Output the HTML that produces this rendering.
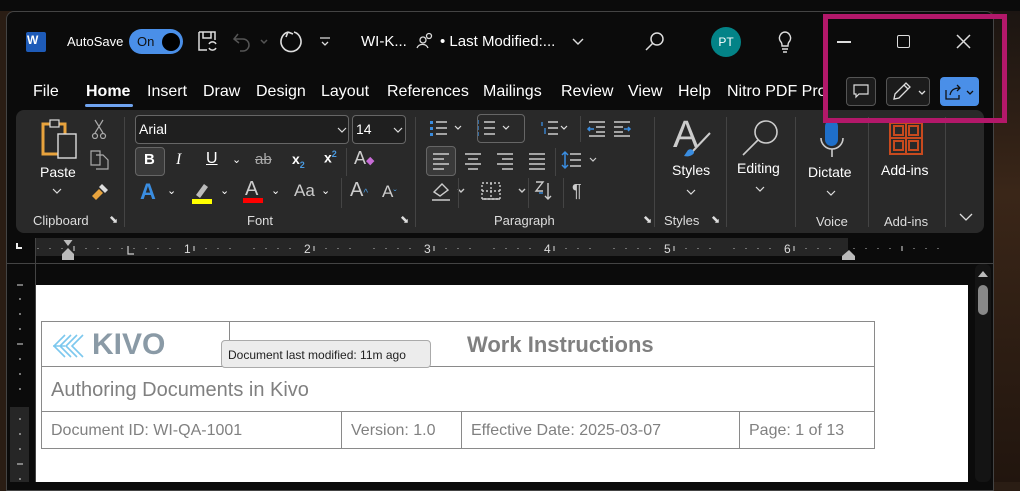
<!DOCTYPE html><html><head><style>
*{margin:0;padding:0;box-sizing:border-box}
body{width:1020px;height:482px;overflow:hidden;background:#2a1d14;font-family:"Segoe UI","Liberation Sans",sans-serif;position:relative;color:#fff}
.a{position:absolute}
.t{font-size:14px;color:#fff;white-space:nowrap}
.tab{position:absolute;top:83px;font-size:16px;color:#fff}
.sep{position:absolute;width:1px;background:#444}
.cell{position:absolute;border:1px solid #8a8a8a;color:#7d7d7d;font-family:"Liberation Sans",sans-serif}
.s{font-size:13px;color:#ddd;position:absolute;white-space:nowrap}
</style></head><body>
<div class="a" style="left:993px;top:0;width:27px;height:482px;background:linear-gradient(#1a1411,#3a2618 40%,#21150e)"></div>
<div class="a" style="left:0;top:0;width:1020px;height:11px;background:#0b0b0b"></div>
<div class="a" style="left:6px;top:11px;width:988px;height:480px;background:#0b0b0b;border:1px solid #444;border-radius:8px 8px 0 0"></div>
<!-- title bar -->
<div class="a" style="left:26px;top:32px;width:20px;height:20px;background:#1e5bb8;border-radius:2px"></div>
<div class="a" style="left:27px;top:33px;font-size:12px;font-weight:bold;color:#fff">W</div>
<div class="t a" style="left:67px;top:34px;font-size:13px">AutoSave</div>
<div class="a" style="left:129px;top:29px;width:54px;height:25px;background:#4a8fe8;border-radius:13px"></div>
<div class="t a" style="left:137px;top:34px;font-size:13px;color:#111">On</div>
<div class="a" style="left:162px;top:33px;width:18px;height:18px;background:#000;border-radius:50%"></div>
<svg class="a" style="left:196px;top:30px" width="24" height="24" fill="none" stroke="#ddd" stroke-width="1.5"><path d="M3 2h16v8M3 2v18h8M7 2v6h8V2M13 14a4 4 0 0 1 7 0M20 18a4 4 0 0 1-7 0"/></svg>
<svg class="a" style="left:232px;top:30px" width="36" height="24" fill="none" stroke="#555" stroke-width="1.5"><path d="M6 4L2 9l5 4M2 9h9a6 6 0 0 1 0 12h-3M29 10l3 3 3-3"/></svg>
<svg class="a" style="left:280px;top:29px" width="24" height="26" fill="none" stroke="#ddd" stroke-width="1.6"><path d="M8 3a10 10 0 1 0 6 0M8 3L6 8M8 3l5 2"/></svg>
<svg class="a" style="left:319px;top:36px" width="12" height="12" fill="none" stroke="#ddd" stroke-width="1.3"><path d="M1 2h10M3 6l3 3 3-3"/></svg>
<div class="t a" style="left:361px;top:33px;font-size:15px">WI-K...</div>
<svg class="a" style="left:416px;top:32px" width="18" height="18" fill="none" stroke="#ddd" stroke-width="1.3"><circle cx="7" cy="8" r="3"/><path d="M1 16a6 6 0 0 1 11 0"/><circle cx="13" cy="4" r="2.5"/></svg>
<div class="t a" style="left:440px;top:33px;font-size:15px">• Last Modified:...</div>
<svg class="a" style="left:572px;top:37px" width="12" height="10" fill="none" stroke="#ddd" stroke-width="1.4"><path d="M1 2l5 5 5-5"/></svg>
<svg class="a" style="left:644px;top:30px" width="22" height="22" fill="none" stroke="#ddd" stroke-width="1.5"><circle cx="13" cy="9" r="6"/><path d="M9 13l-7 7"/></svg>
<div class="a" style="left:711px;top:27px;width:30px;height:30px;border-radius:50%;background:#038387;color:#fff;font-size:12px;text-align:center;line-height:30px">PT</div>
<svg class="a" style="left:776px;top:30px" width="18" height="24" fill="none" stroke="#ddd" stroke-width="1.4"><path d="M9 2a6 6 0 0 0-4 10c1 1 1 3 1 4h6c0-1 0-3 1-4a6 6 0 0 0-4-10M6 19h6M7 22h4"/></svg>
<div class="a" style="left:837px;top:41px;width:14px;height:1.5px;background:#ddd"></div>
<div class="a" style="left:897px;top:35px;width:13px;height:13px;border:1.5px solid #ddd;border-radius:2px"></div>
<svg class="a" style="left:956px;top:34px" width="15" height="15" stroke="#ddd" stroke-width="1.5"><path d="M1 1l13 13M14 1L1 14"/></svg>
<!-- tabs -->
<div class="tab" style="left:33px">File</div>
<div class="tab" style="left:86px;font-weight:bold">Home</div>
<div class="a" style="left:85px;top:104px;width:48px;height:3px;background:#6fa3ef;border-radius:2px"></div>
<div class="tab" style="left:147px">Insert</div>
<div class="tab" style="left:203px">Draw</div>
<div class="tab" style="left:256px">Design</div>
<div class="tab" style="left:321px">Layout</div>
<div class="tab" style="left:387px">References</div>
<div class="tab" style="left:483px">Mailings</div>
<div class="tab" style="left:561px">Review</div>
<div class="tab" style="left:628px">View</div>
<div class="tab" style="left:678px">Help</div>
<div class="tab" style="left:727px">Nitro PDF Pro</div>
<div class="a" style="left:846px;top:77px;width:30px;height:29px;border:1px solid #555;border-radius:4px;background:#1c1c1c"></div>
<svg class="a" style="left:853px;top:83px" width="16" height="16" fill="none" stroke="#ddd" stroke-width="1.2"><path d="M1 2h14v9H6l-3 3v-3H1z"/></svg>
<div class="a" style="left:886px;top:77px;width:44px;height:29px;border:1px solid #555;border-radius:4px;background:#1c1c1c"></div>
<svg class="a" style="left:891px;top:80px" width="36" height="22" fill="none" stroke="#ddd" stroke-width="1.3"><path d="M3 19l1-5L15 3l4 4L8 18zM13 5l4 4M28 11l3 3 3-3"/></svg>
<div class="a" style="left:940px;top:77px;width:39px;height:29px;background:#4a8fe8;border-radius:4px"></div>
<svg class="a" style="left:944px;top:82px" width="34" height="20" fill="none" stroke="#111" stroke-width="1.3"><path d="M2 8v9h13v-4M6 13c1-5 4-7 10-7M13 3l3 3-3 3M23 9l3 3 3-3"/></svg>
<!-- ribbon -->
<div class="a" style="left:16px;top:110px;width:968px;height:123px;background:#292929;border-radius:8px"></div>
<svg class="a" style="left:40px;top:118px" width="40" height="42"><rect x="3" y="6" width="22" height="30" fill="none" stroke="#e8a33d" stroke-width="3"/><rect x="10" y="2" width="9" height="7" fill="#292929" stroke="#ddd" stroke-width="1.2"/><rect x="18" y="16" width="18" height="24" fill="#292929" stroke="#ddd" stroke-width="1.4"/></svg>
<div class="t a" style="left:40px;top:164px">Paste</div>
<svg class="a" style="left:52px;top:187px" width="10" height="8" fill="none" stroke="#ddd" stroke-width="1.2"><path d="M1 2l4 4 4-4"/></svg>
<svg class="a" style="left:91px;top:119px" width="16" height="20" fill="none" stroke="#aaa" stroke-width="1.2"><path d="M4 1l8 13M12 1L4 14"/><circle cx="4" cy="17" r="2.5"/><circle cx="12" cy="17" r="2.5"/></svg>
<svg class="a" style="left:90px;top:150px" width="20" height="20" fill="none" stroke="#aaa" stroke-width="1.2"><path d="M1 1h9v14H1zM6 5h7l5 5v9H6"/></svg>
<svg class="a" style="left:90px;top:182px" width="20" height="20"><path d="M12 2l6 6-3 3-6-6z" fill="#ddd"/><path d="M2 14l7-7 4 4-7 7z" fill="#e8a33d"/></svg>
<div class="s" style="left:33px;top:213px">Clipboard</div>
<div class="s" style="left:109px;top:213px;font-size:11px">⬊</div>
<div class="sep" style="left:124px;top:117px;height:110px"></div>
<div class="a" style="left:135px;top:115px;width:214px;height:29px;border:1px solid #666;border-radius:4px;background:#1f1f1f"></div>
<div class="t a" style="left:139px;top:121px">Arial</div>
<svg class="a" style="left:337px;top:126px" width="10" height="8" fill="none" stroke="#ddd" stroke-width="1.2"><path d="M1 2l4 4 4-4"/></svg>
<div class="a" style="left:352px;top:115px;width:54px;height:29px;border:1px solid #666;border-radius:4px;background:#1f1f1f"></div>
<div class="t a" style="left:356px;top:121px">14</div>
<svg class="a" style="left:393px;top:126px" width="10" height="8" fill="none" stroke="#ddd" stroke-width="1.2"><path d="M1 2l4 4 4-4"/></svg>
<div class="a" style="left:135px;top:147px;width:30px;height:29px;border:1px solid #666;border-radius:4px;background:#3a3a3a"></div>
<div class="t a" style="left:144px;top:151px;font-weight:bold;font-family:'Liberation Sans';font-size:15px">B</div>
<div class="t a" style="left:176px;top:151px;font-style:italic;font-family:'Liberation Serif';font-size:16px">I</div>
<div class="t a" style="left:206px;top:150px;text-decoration:underline;font-size:16px">U</div>
<div class="t a" style="left:232px;top:153px;font-size:11px">⌄</div>
<div class="t a" style="left:255px;top:151px;text-decoration:line-through;color:#aaa;font-size:15px">ab</div>
<div class="t a" style="left:292px;top:151px;font-weight:bold;font-size:14px">x<sub style="color:#4a9ae0;font-size:9px">2</sub></div>
<div class="t a" style="left:324px;top:149px;font-weight:bold;font-size:14px">x<sup style="color:#4a9ae0;font-size:9px">2</sup></div>
<div class="sep" style="left:346px;top:148px;height:28px"></div>
<div class="t a" style="left:354px;top:148px;font-size:18px;color:#ccc">A<span style="color:#c86dd7;font-size:11px">◆</span></div>
<div class="t a" style="left:140px;top:179px;font-size:22px;color:#3a8de0;font-weight:bold">A</div>
<div class="t a" style="left:167px;top:184px;font-size:11px">⌄</div>
<svg class="a" style="left:192px;top:181px" width="22" height="24"><path d="M4 14l8-11 4 3-8 11z" fill="#bbb"/><rect x="0" y="18" width="20" height="5" fill="#ffff00"/></svg>
<div class="t a" style="left:220px;top:184px;font-size:11px">⌄</div>
<div class="t a" style="left:245px;top:178px;font-size:20px;color:#ccc">A</div>
<div class="a" style="left:243px;top:198px;width:20px;height:5px;background:#ff0000"></div>
<div class="t a" style="left:271px;top:184px;font-size:11px">⌄</div>
<div class="t a" style="left:294px;top:181px;font-size:17px;color:#ccc">Aa</div>
<div class="t a" style="left:321px;top:184px;font-size:11px">⌄</div>
<div class="sep" style="left:341px;top:178px;height:30px"></div>
<div class="t a" style="left:350px;top:179px;font-size:20px;color:#ccc">A<span style="font-size:10px;color:#4a9ae0">^</span></div>
<div class="t a" style="left:382px;top:182px;font-size:17px;color:#ccc">A<span style="font-size:10px;color:#4a9ae0">ˇ</span></div>
<div class="s" style="left:247px;top:213px">Font</div>
<div class="s" style="left:400px;top:213px;font-size:11px">⬊</div>
<div class="sep" style="left:415px;top:117px;height:110px"></div>
<!-- paragraph -->
<svg class="a" style="left:428px;top:118px" width="150" height="22" fill="none" stroke="#ccc" stroke-width="1.5"><path d="M8 4h11M8 10h11M8 16h11M56 4h11M56 10h11M56 16h11M120 4h10M120 10h10M120 16h10"/><path d="M2 3h3v3H2zM2 9h3v3H2zM2 15h3v3H2z" fill="#3a8de0" stroke="none"/><path d="M50 2v4M50 8v4M50 14v4M114 4v4M117 10v6" stroke="#3a8de0" stroke-width="1.3"/><path d="M27 8l3 3 3-3M75 8l3 3 3-3M133 8l3 3 3-3" stroke="#ddd" stroke-width="1.2"/></svg>
<div class="a" style="left:477px;top:114px;width:48px;height:29px;border:1px solid #666;border-radius:4px"></div>
<svg class="a" style="left:586px;top:120px" width="60" height="18" fill="none" stroke="#ccc" stroke-width="1.5"><path d="M3 2h16M10 7h9M10 12h9M3 16h16M28 2h16M28 7h9M28 12h9M28 16h16"/><path d="M8 9H2M4 7l-2 2 2 2M44 9h-6M42 7l2 2-2 2" stroke="#3a8de0"/></svg>
<div class="sep" style="left:580px;top:116px;height:26px"></div>
<div class="a" style="left:426px;top:146px;width:30px;height:30px;border:1px solid #666;border-radius:4px;background:#3a3a3a"></div>
<svg class="a" style="left:431px;top:151px" width="120" height="20" fill="none" stroke="#ccc" stroke-width="1.5"><path d="M2 3h16M2 8h11M2 13h16M2 18h11M34 3h16M37 8h10M34 13h16M37 18h10M66 3h16M71 8h11M66 13h16M71 18h11M98 3h16M98 8h16M98 13h16M98 18h16"/></svg>
<div class="sep" style="left:555px;top:148px;height:28px"></div>
<svg class="a" style="left:560px;top:150px" width="40" height="22" fill="none" stroke="#ccc" stroke-width="1.5"><path d="M10 4h11M10 10h11M10 16h11"/><path d="M5 2v16M2 5l3-3 3 3M2 15l3 3 3-3" stroke="#3a8de0"/><path d="M30 8l3 3 3-3" stroke-width="1.2"/></svg>
<svg class="a" style="left:430px;top:180px" width="170" height="24" fill="none" stroke="#ccc" stroke-width="1.4"><path d="M4 12l8-8 6 6-8 6zM2 20h18"/><path d="M28 9l3 3 3-3M89 9l3 3 3-3"/><path d="M52 3h18v16H52zM61 3v16M52 11h18" stroke-dasharray="2 2"/><path d="M52 19h18"/><path d="M106 2h7l-7 9h7M118 3v16M115 16l3 3 3-3" /><path d="M109 13h4" stroke="#3a8de0"/></svg>
<div class="t a" style="left:572px;top:181px;font-size:18px;color:#ccc">¶</div>
<div class="sep" style="left:458px;top:178px;height:30px"></div>
<div class="sep" style="left:528px;top:178px;height:30px"></div>
<div class="sep" style="left:563px;top:178px;height:30px"></div>
<div class="s" style="left:494px;top:213px">Paragraph</div>
<div class="s" style="left:643px;top:213px;font-size:11px">⬊</div>
<div class="sep" style="left:654px;top:117px;height:110px"></div>
<!-- styles -->
<div class="a" style="left:673px;top:114px;font-size:38px;color:#ccc;font-family:'Liberation Sans';font-weight:300">A</div>
<svg class="a" style="left:682px;top:130px" width="32" height="30"><path d="M28 3L10 22" stroke="#ccc" stroke-width="2"/><path d="M6 20c3-2 6 0 6 3-2 3-6 4-10 3z" fill="#3a8de0"/></svg>
<div class="t a" style="left:672px;top:162px">Styles</div>
<svg class="a" style="left:686px;top:188px" width="10" height="8" fill="none" stroke="#ddd" stroke-width="1.2"><path d="M1 2l4 4 4-4"/></svg>
<div class="s" style="left:664px;top:213px">Styles</div>
<div class="s" style="left:711px;top:213px;font-size:11px">⬊</div>
<div class="sep" style="left:726px;top:117px;height:110px"></div>
<svg class="a" style="left:740px;top:117px" width="40" height="40" fill="none" stroke="#ccc" stroke-width="1.6"><circle cx="26" cy="15" r="11"/><path d="M18 23L3 38"/></svg>
<div class="t a" style="left:737px;top:160px">Editing</div>
<svg class="a" style="left:755px;top:185px" width="10" height="8" fill="none" stroke="#ddd" stroke-width="1.2"><path d="M1 2l4 4 4-4"/></svg>
<div class="sep" style="left:795px;top:117px;height:110px"></div>
<svg class="a" style="left:818px;top:120px" width="28" height="38"><rect x="7" y="0" width="13" height="26" rx="6.5" fill="#1f6fc9"/><path d="M3 18a11 11 0 0 0 22 0M14 29v8" fill="none" stroke="#ccc" stroke-width="1.6"/></svg>
<div class="t a" style="left:808px;top:164px">Dictate</div>
<svg class="a" style="left:826px;top:189px" width="10" height="8" fill="none" stroke="#ddd" stroke-width="1.2"><path d="M1 2l4 4 4-4"/></svg>
<div class="s" style="left:816px;top:214px">Voice</div>
<div class="sep" style="left:868px;top:117px;height:110px"></div>
<svg class="a" style="left:889px;top:122px" width="36" height="34" fill="none" stroke="#c84a1e" stroke-width="2"><rect x="1" y="1" width="32" height="31"/><path d="M1 16h32M17 1v31"/><rect x="5" y="4" width="9" height="9"/><rect x="20" y="4" width="9" height="9"/><rect x="5" y="19" width="9" height="9"/><rect x="20" y="19" width="9" height="9"/></svg>
<div class="t a" style="left:881px;top:162px">Add-ins</div>
<div class="s" style="left:884px;top:214px">Add-ins</div>
<div class="sep" style="left:945px;top:117px;height:110px"></div>
<svg class="a" style="left:959px;top:212px" width="14" height="9" fill="none" stroke="#ddd" stroke-width="1.3"><path d="M1 2l6 6 6-6"/></svg>
<!-- ruler -->
<div class="a" style="left:16px;top:243px;width:6px;height:6px;border-left:2px solid #eee;border-bottom:2px solid #eee"></div>
<div class="a" style="left:36px;top:238px;width:812px;height:18px;background:#262626"></div>
<div class="a" style="left:6px;top:263px;width:988px;height:1px;background:#444"></div>
<div class="a" style="left:35px;top:238px;width:1px;height:244px;background:#444"></div>
<div class="a" style="left:36px;top:247px;width:930px;font-size:12px;color:#ddd;white-space:nowrap;font-family:'Liberation Sans'">
<span class="a" style="left:148px;top:-5px">1</span><span class="a" style="left:268px;top:-5px">2</span><span class="a" style="left:388px;top:-5px">3</span><span class="a" style="left:508px;top:-5px">4</span><span class="a" style="left:628px;top:-5px">5</span><span class="a" style="left:748px;top:-5px">6</span></div>
<svg class="a" style="left:36px;top:240px" width="930" height="20">
<g stroke="#bbb" stroke-width="1">
<path d="M2 8v1M14 8v1M26 8v1M50 8v1M62 8v1M74 8v1M86 8v1M98 8v1M110 8v1M122 8v1M134 8v1M170 8v1M182 8v1M194 8v1M218 8v1M230 8v1M242 8v1M254 8v1M290 8v1M302 8v1M314 8v1M338 8v1M350 8v1M362 8v1M374 8v1M410 8v1M422 8v1M434 8v1M458 8v1M470 8v1M482 8v1M494 8v1M530 8v1M542 8v1M554 8v1M578 8v1M590 8v1M602 8v1M614 8v1M650 8v1M662 8v1M674 8v1M698 8v1M710 8v1M722 8v1M734 8v1M770 8v1M782 8v1M794 8v1M818 8v1M830 8v1M842 8v1M854 8v1M878 8v1M890 8v1M902 8v1"/>
<path d="M38 6v5M158 6v5M278 6v5M398 6v5M518 6v5M638 6v5M758 6v5M866 6v5" stroke="#ddd"/></g>
<path d="M26 -2h12l-6 8zM26 20h12v-6l-6-6-6 6z" fill="#bbb"/><path d="M92 6v8h6" fill="none" stroke="#ccc" stroke-width="1.2"/><path d="M806 20h13v-4l-6-6-7 6z" fill="#bbb"/></svg>
<!-- vertical ruler -->
<div class="a" style="left:10px;top:407px;width:19px;height:75px;background:#262626"></div>
<svg class="a" style="left:10px;top:270px" width="20" height="212" stroke="#ddd"><path d="M7 15h6M9 29h2M9 44h2M9 59h2M7 74h6M9 89h2M9 104h2M9 119h2M9 149h2M9 164h2M9 179h2M7 194h6M9 209h2"/></svg>
<!-- page -->
<div class="a" style="left:36px;top:285px;width:932px;height:197px;background:#fff"></div>
<div class="a" style="left:975px;top:264px;width:16px;height:218px;background:#141414;border-radius:6px"></div>
<svg class="a" style="left:978px;top:270px" width="10" height="8"><path d="M0 7l5-6 5 6z" fill="#bbb"/></svg>
<div class="a" style="left:978px;top:285px;width:10px;height:30px;background:#888;border-radius:5px"></div>
<!-- table -->
<div class="cell" style="left:41px;top:321px;width:189px;height:46px"></div>
<div class="cell" style="left:229px;top:321px;width:646px;height:46px"></div>
<div class="cell" style="left:41px;top:366px;width:834px;height:46px"></div>
<div class="cell" style="left:41px;top:411px;width:301px;height:38px"></div>
<div class="cell" style="left:341px;top:411px;width:121px;height:38px"></div>
<div class="cell" style="left:461px;top:411px;width:279px;height:38px"></div>
<div class="cell" style="left:739px;top:411px;width:136px;height:38px"></div>
<svg class="a" style="left:51px;top:333px" width="40" height="26" fill="none" stroke="#7cc8ee" stroke-width="1.6"><path d="M14 2L3 13l11 11M20 2L9 13l11 11M26 2L15 13l11 11M32 2L21 13l11 11M2 13h12"/></svg>
<div class="a" style="left:92px;top:328px;font-family:'Liberation Sans';font-weight:bold;font-size:30px;color:#8a9aa6">KIVO</div>
<div class="a" style="left:467px;top:332px;font-family:'Liberation Sans';font-weight:bold;font-size:22px;color:#808080">Work Instructions</div>
<div class="a" style="left:51px;top:379px;font-family:'Liberation Sans';font-size:20px;color:#808080">Authoring Documents in Kivo</div>
<div class="a" style="left:51px;top:422px;font-family:'Liberation Sans';font-size:16px;color:#808080">Document ID: WI-QA-1001</div>
<div class="a" style="left:351px;top:422px;font-family:'Liberation Sans';font-size:16px;color:#808080">Version: 1.0</div>
<div class="a" style="left:471px;top:422px;font-family:'Liberation Sans';font-size:16px;color:#808080">Effective Date: 2025-03-07</div>
<div class="a" style="left:749px;top:422px;font-family:'Liberation Sans';font-size:16px;color:#808080">Page: 1 of 13</div>
<!-- tooltip -->
<div class="a" style="left:221px;top:340px;width:210px;height:28px;background:#ececec;border:1px solid #aaa;border-radius:4px;font-size:12px;color:#222;padding:7px 0 0 6px;white-space:nowrap">Document last modified: 11m ago</div>
<!-- highlight -->
<div class="a" style="left:823px;top:14px;width:184px;height:109px;border:5px solid #b3186a"></div>
</body></html>
